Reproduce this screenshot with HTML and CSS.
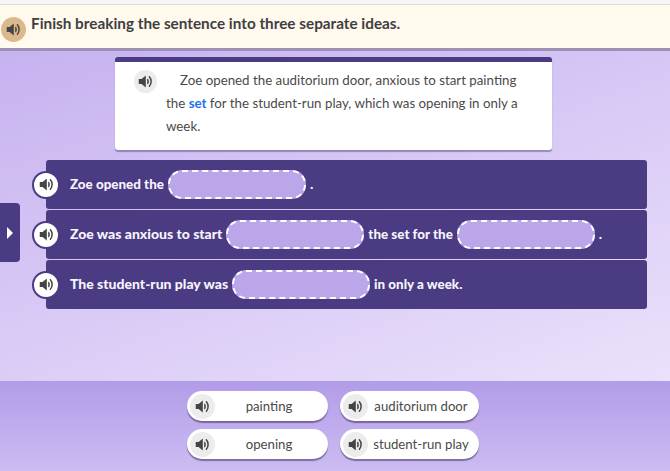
FILE: index.html
```html
<!DOCTYPE html>
<html lang="en">
<head>
    <meta charset="UTF-8">
    <meta name="viewport" content="width=device-width, initial-scale=1.0">
    <title>Finish breaking the sentence</title>
    <link rel="stylesheet" href="styles.css">
</head>
<body>
    <svg class="icon-defs" width="0" height="0">
        <symbol id="speaker" viewBox="0 0 20 20">
            <path d="M1 6.800h3.800L10.400 2v16L4.800 13.200H1z" fill="currentColor"/>
            <path d="M12.800 6.500c1.600 2 1.600 5 0 7z" fill="currentColor" stroke="currentColor" stroke-width="1"/>
            <path d="M15.200 3.600c3 3.400 3 9.400 0 12.800" fill="none" stroke="currentColor" stroke-width="2" stroke-linecap="round"/>
        </symbol>
    </svg>

    <div class="top-strip"></div>

    <div class="instruction">
        <span class="audio audio-tan"><svg><use href="#speaker"/></svg></span>
        <div class="instruction-text">Finish breaking the sentence into three separate ideas.</div>
    </div>

    <div class="stage">
        <div class="side-tab"><span class="side-arrow"></span></div>

        <div class="passage">
            <span class="audio audio-grey"><svg><use href="#speaker"/></svg></span>
            <p class="passage-text"><span class="indent"></span>Zoe opened the auditorium door, anxious to start painting the <b class="vocab">set</b> for the student-run play, which was opening in only a week.</p>
        </div>

        <div class="rows">
            <div class="row">
                <span class="audio audio-ring"><svg><use href="#speaker"/></svg></span>
                <span class="row-text row-text-tight">Zoe opened the</span>
                <span class="blank"></span>
                <span class="row-text">.</span>
            </div>
            <div class="row">
                <span class="audio audio-ring"><svg><use href="#speaker"/></svg></span>
                <span class="row-text">Zoe was anxious to start</span>
                <span class="blank"></span>
                <span class="row-text row-text-tight">the set for the</span>
                <span class="blank"></span>
                <span class="row-text">.</span>
            </div>
            <div class="row">
                <span class="audio audio-ring"><svg><use href="#speaker"/></svg></span>
                <span class="row-text">The student-run play was</span>
                <span class="blank"></span>
                <span class="row-text row-text-tight">in only a week.</span>
            </div>
        </div>
    </div>

    <div class="tray">
        <div class="chip">
            <span class="audio audio-chip"><svg><use href="#speaker"/></svg></span>
            <span class="chip-text">painting</span>
        </div>
        <div class="chip">
            <span class="audio audio-chip"><svg><use href="#speaker"/></svg></span>
            <span class="chip-text">auditorium door</span>
        </div>
        <div class="chip">
            <span class="audio audio-chip"><svg><use href="#speaker"/></svg></span>
            <span class="chip-text">opening</span>
        </div>
        <div class="chip">
            <span class="audio audio-chip"><svg><use href="#speaker"/></svg></span>
            <span class="chip-text">student-run play</span>
        </div>
    </div>
</body>
</html>
```

FILE: styles.css
```css
html, body {
    height: 100%;
}
body {
    font-family: "Lato", "Noto Sans", sans-serif;
    color: #444;
    margin: 0;
    width: 670px;
    height: 471px;
    overflow: hidden;
    display: flex;
    flex-direction: column;
}
.icon-defs {
    position: absolute;
}
.top-strip {
    flex: 0 0 4px;
    background-color: #f6f6f6;
    border-bottom: 1px solid #dedede;
}

/* speaker buttons */
.audio {
    display: flex;
    align-items: center;
    justify-content: center;
    border-radius: 50%;
    flex: 0 0 auto;
    box-sizing: border-box;
    color: #444;
}
.audio svg {
    width: 15px;
    height: 15px;
}
.audio-tan {
    width: 25px;
    height: 25px;
    background-color: #dcb98c;
}
.audio-grey {
    width: 23px;
    height: 23px;
    margin-top: 1px;
    background-color: #ececec;
}
.audio-ring {
    width: 28px;
    height: 28px;
    margin-left: -14px;
    background-color: white;
    border: 2px solid #4a3b82;
}
.audio-chip {
    width: 25px;
    height: 25px;
    background-color: #ececec;
}

.instruction {
    flex: 0 0 46px;
    box-sizing: border-box;
    display: flex;
    align-items: flex-start;
    padding: 12px 0 0 1px;
    background-color: #fff9ee;
    border-bottom: 3px solid #9c90b4;
}
.instruction-text {
    font-size: 15.3px;
    font-weight: 700;
    color: #3f3f3f;
    margin: -3px 0 0 5px;
}

.stage {
    flex: 1 1 auto;
    position: relative;
    display: flex;
    flex-direction: column;
    align-items: center;
    background: linear-gradient(160deg, #c6b2f0, #ebe1fb);
    padding-top: 6px;
    box-sizing: border-box;
}
.side-tab {
    position: absolute;
    left: 0;
    top: 152px;
    width: 20px;
    height: 59px;
    background-color: #4a3b82;
    border-radius: 0 4px 4px 0;
    display: flex;
    align-items: center;
    justify-content: center;
}
.side-arrow {
    border-left: 6px solid white;
    border-top: 6px solid transparent;
    border-bottom: 6px solid transparent;
}

.passage {
    width: 437px;
    height: 93px;
    margin-left: -3px;
    box-sizing: border-box;
    background-color: white;
    border-top: 5px solid #4a3b82;
    border-radius: 3px;
    box-shadow: 0 2px 1px rgba(70, 60, 110, 0.45);
    display: flex;
    padding: 7px 20px 0 19px;
    gap: 9px;
}
.passage-text {
    margin: 0;
    font-size: 13.3px;
    line-height: 23px;
    color: #4a4a4a;
}
.indent {
    display: inline-block;
    width: 14px;
}
.vocab {
    color: #1a73e8;
    font-weight: 700;
}

.rows {
    width: 601px;
    margin: 10px 0 0 23px;
    display: flex;
    flex-direction: column;
    gap: 1px;
}
.row {
    height: 49px;
    background-color: #4a3b82;
    border-radius: 3px;
    display: flex;
    align-items: center;
    gap: 4px;
    color: white;
}
.row .audio {
    margin-right: 6px;
}
.row-text {
    font-size: 14px;
    font-weight: 900;
    color: #f6f3fc;
    position: relative;
    top: -1px;
}
.row-text-tight {
    font-size: 13.4px;
}
.blank {
    width: 138px;
    height: 29px;
    box-sizing: border-box;
    background-color: #baa6e8;
    border: 2px dashed white;
    border-radius: 14px;
}

.tray {
    flex: 0 0 90px;
    box-sizing: border-box;
    background: linear-gradient(180deg, #b29ce9, #cdbcf2);
    padding: 10px 4px 0 0;
    display: grid;
    grid-template-columns: 141px 139px;
    grid-auto-rows: 30px;
    gap: 8px 12px;
    justify-content: center;
}
.chip {
    background-color: white;
    border-radius: 15px;
    box-shadow: 0 2px 1px rgba(60, 50, 90, 0.55);
    display: flex;
    align-items: center;
    padding-left: 3px;
}
.chip-text {
    flex: 1 1 auto;
    text-align: center;
    font-size: 13.2px;
    color: #4a4a4a;
    white-space: nowrap;
    padding-right: 5px;
}
```
